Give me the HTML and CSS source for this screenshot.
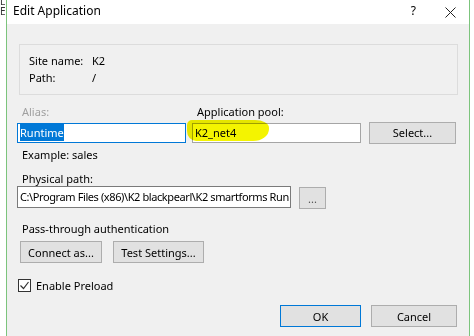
FILE: index.html
```html
<!DOCTYPE html>
<html lang="en">
<head>
    <meta charset="UTF-8">
    <title>Edit Application</title>
    <link rel="stylesheet" href="styles.css">
</head>
<body>
<div class="screen">
    <div class="behind">
        <span>L</span>
        <span>E</span>
    </div>

    <div class="window">
        <div class="titlebar">
            <span class="title">Edit Application</span>
            <span class="help">?</span>
            <svg class="close" width="11" height="11" viewBox="0 0 11 11">
                <path d="M0.5 0.5 L10.5 10.5 M10.5 0.5 L0.5 10.5" stroke="#222" stroke-width="1" fill="none"/>
            </svg>
        </div>

        <div class="content">
            <div class="sitebox">
                <div class="info-row"><span class="info-key">Site name:</span><span>K2</span></div>
                <div class="info-row"><span class="info-key">Path:</span><span>/</span></div>
            </div>

            <div class="app-grid">
                <span class="lbl disabled">Alias:</span>
                <span class="lbl">Application pool:</span>
                <span></span>
                <div class="field focused"><span class="sel">Runtime</span></div>
                <div class="field pool">K2_net4<span class="marker"></span></div>
                <button class="btn select">Select...</button>
            </div>

            <div class="lbl example">Example: sales</div>
            <div class="lbl phys-label">Physical path:</div>
            <div class="path-row">
                <div class="field path">C:\Program Files (x86)\K2 blackpearl\K2 smartforms Run</div>
                <button class="btn browse">...</button>
            </div>

            <div class="lbl auth-label">Pass-through authentication</div>
            <div class="auth-row">
                <button class="btn connect">Connect as...</button>
                <button class="btn test">Test Settings...</button>
            </div>

            <div class="check-row">
                <span class="checkbox">
                    <svg width="11" height="11" viewBox="0 0 11 11">
                        <path d="M1.5 5.5 L4.5 8.5 L9.5 2" stroke="#333" stroke-width="1.2" fill="none"/>
                    </svg>
                </span>
                Enable Preload
            </div>

            <div class="footer">
                <button class="btn ok">OK</button>
                <button class="btn cancel">Cancel</button>
            </div>
        </div>
    </div>

    <div class="outside"></div>
</div>
</body>
</html>
```

FILE: styles.css
```css
body {
    margin: 0;
    background: #fff;
    font-family: 'Noto Sans', 'Open Sans', sans-serif;
    font-size: 11px;
    color: #000;
}
.screen {
    display: flex;
    width: 474px;
    height: 336px;
    overflow: hidden;
}
.behind {
    width: 6px;
    overflow: hidden;
    display: flex;
    flex-direction: column;
    line-height: 10px;
    margin-top: -4px;
    font-size: 10px;
    color: #333;
}
.window {
    width: 462px;
    border-left: 1px solid #7cc47c;
    border-right: 1px solid #7cc47c;
    display: flex;
    flex-direction: column;
}
.outside {
    flex: 1;
    background: #fff;
}
.titlebar {
    height: 24px;
    box-sizing: border-box;
    background: #fff;
    display: flex;
    align-items: center;
    padding: 0 13px 4px 6px;
    font-size: 12px;
}
.help {
    margin-left: auto;
    margin-right: 29px;
    font-size: 12px;
}
.close {
    margin-top: 4px;
}
.content {
    flex: 1;
    background: #f0f0f0;
    padding: 20px 12px 0 10px;
}
.sitebox {
    height: 51px;
    box-sizing: border-box;
    margin: 0 -1px 0 2px;
    border: 1px solid #dcdcdc;
    padding: 7px 0 0 9px;
}
.info-row {
    line-height: 17px;
    display: flex;
}
.info-key {
    width: 63px;
}
.app-grid {
    margin-top: 9px;
    display: grid;
    grid-template-columns: 169px 169px 89px;
    grid-template-rows: 16px 23px;
    column-gap: 6px;
    row-gap: 1px;
}
.lbl {
    line-height: 16px;
    padding-left: 5px;
}
.disabled {
    color: #a0a0a0;
}
.field {
    box-sizing: border-box;
    height: 20px;
    align-self: center;
    background: #fff;
    border: 1px solid #8c8c8c;
    line-height: 18px;
    padding-left: 2px;
    white-space: nowrap;
    overflow: hidden;
}
.focused {
    border-color: #0078d7;
}
.sel {
    background: #0078d7;
    color: #fff;
    padding: 1px 0;
}
.pool {
    position: relative;
    overflow: visible;
    border-color: #a5a5a5;
}
.marker {
    position: absolute;
    left: -6px;
    top: -4px;
    width: 82px;
    height: 21px;
    background: #f4f400;
    border-radius: 5px 14px 16px 9px / 5px 8px 12px 10px;
    mix-blend-mode: multiply;
}
.btn {
    box-sizing: border-box;
    height: 22px;
    background: #e1e1e1;
    border: 1px solid #adadad;
    font-family: inherit;
    font-size: 11px;
    color: #000;
    padding: 0;
}
.select {
    width: 87px;
    justify-self: end;
    align-self: center;
}
.example {
    margin-top: 3px;
}
.phys-label {
    margin-top: 8px;
    line-height: 15px;
}
.path-row {
    display: flex;
    gap: 8px;
    height: 23px;
}
.path {
    width: 274px;
    height: 22px;
    align-self: flex-start;
    line-height: 20px;
    padding-left: 2px;
    border-color: #7a7a7a;
    letter-spacing: -0.4px;
}
.browse {
    width: 27px;
    align-self: flex-end;
    color: #555;
}
.auth-label {
    margin-top: 12px;
}
.auth-row {
    display: flex;
    gap: 11px;
    margin: 4px 0 0 3px;
}
.connect {
    width: 82px;
}
.test {
    width: 91px;
}
.check-row {
    margin: 16px 0 0 1px;
    display: flex;
    align-items: center;
    gap: 5px;
    line-height: 13px;
}
.checkbox {
    width: 13px;
    height: 13px;
    box-sizing: border-box;
    border: 1px solid #333;
    background: #fff;
    display: flex;
    align-items: center;
    justify-content: center;
}
.footer {
    margin-top: 13px;
    display: flex;
    justify-content: flex-end;
    gap: 10px;
}
.ok {
    width: 81px;
    border-color: #0078d7;
}
.cancel {
    width: 86px;
}
```
